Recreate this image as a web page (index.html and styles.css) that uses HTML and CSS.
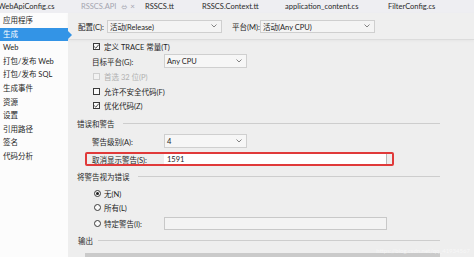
FILE: index.html
```html
<!DOCTYPE html>
<html>
<head>
<meta charset="utf-8">
<link rel="stylesheet" href="styles.css">
</head>
<body>
<div class="app">
  <div class="tabs">
    <span class="tab w84 first">WebApiConfig.cs</span>
    <span class="tab w64 dim">RSSCS.API <span class="pin">⇔</span> <span class="close">×</span></span>
    <span class="tab w57">RSSCS.tt</span>
    <span class="tab w84">RSSCS.Context.tt</span>
    <span class="tab w103">application_content.cs</span>
    <span class="tab">FilterConfig.cs</span>
  </div>
  <div class="body">
    <nav class="side">
      <div class="item">应用程序</div>
      <div class="item selected">生成</div>
      <div class="item">Web</div>
      <div class="item">打包/发布 Web</div>
      <div class="item">打包/发布 SQL</div>
      <div class="item">生成事件</div>
      <div class="item">资源</div>
      <div class="item">设置</div>
      <div class="item">引用路径</div>
      <div class="item">签名</div>
      <div class="item">代码分析</div>
    </nav>
    <main class="main">
      <div class="config">
        <span class="cfg-label">配置(C):</span>
        <div class="select cfg-select"><span>活动(Release)</span><svg class="chev" viewBox="0 0 6 4" width="6" height="4"><polyline points="0.5,0.5 3,3 5.5,0.5" fill="none" stroke="#666" stroke-width="0.8"/></svg></div>
        <span class="cfg-label plat">平台(M):</span>
        <div class="select cfg-select"><span>活动(Any CPU)</span><svg class="chev" viewBox="0 0 6 4" width="6" height="4"><polyline points="0.5,0.5 3,3 5.5,0.5" fill="none" stroke="#666" stroke-width="0.8"/></svg></div>
      </div>
      <div class="content">
        <div class="row r-trace">
          <span class="cb checked"><svg viewBox="0 0 7 7" width="7" height="7"><polyline points="1.2,3.6 2.8,5.2 5.8,1.6" fill="none" stroke="#333" stroke-width="0.9"/></svg></span>
          <span>定义 TRACE 常量(T)</span>
        </div>
        <div class="row r-target">
          <span class="label">目标平台(G):</span>
          <div class="select small"><span>Any CPU</span><svg class="chev" viewBox="0 0 6 4" width="6" height="4"><polyline points="0.5,0.5 3,3 5.5,0.5" fill="none" stroke="#666" stroke-width="0.8"/></svg></div>
        </div>
        <div class="row r-pref disabled">
          <span class="cb dis"></span>
          <span>首选 32 位(P)</span>
        </div>
        <div class="row r-unsafe">
          <span class="cb"></span>
          <span>允许不安全代码(F)</span>
        </div>
        <div class="row r-opt">
          <span class="cb checked"><svg viewBox="0 0 7 7" width="7" height="7"><polyline points="1.2,3.6 2.8,5.2 5.8,1.6" fill="none" stroke="#333" stroke-width="0.9"/></svg></span>
          <span>优化代码(Z)</span>
        </div>
        <div class="section s-errors"><span>错误和警告</span><i class="line"></i></div>
        <div class="row r-level">
          <span class="label">警告级别(A):</span>
          <div class="select small"><span>4</span><svg class="chev" viewBox="0 0 6 4" width="6" height="4"><polyline points="0.5,0.5 3,3 5.5,0.5" fill="none" stroke="#666" stroke-width="0.8"/></svg></div>
        </div>
        <div class="row r-suppress">
          <span class="label">取消显示警告(S):</span>
          <div class="input white">1591</div>
          <div class="highlight"></div>
        </div>
        <div class="section s-treat"><span>将警告视为错误</span><i class="line"></i></div>
        <div class="row r-none">
          <span class="radio on"></span>
          <span>无(N)</span>
        </div>
        <div class="row r-all">
          <span class="radio"></span>
          <span>所有(L)</span>
        </div>
        <div class="row r-spec">
          <span class="radio"></span>
          <span class="spec-label">特定警告(I):</span>
          <div class="input"></div>
        </div>
        <div class="section s-output"><span>输出</span><i class="line"></i></div>
        <div class="strip"><span class="wm">https://blog.csdn.net/qq_41934567</span></div>
      </div>
    </main>
  </div>
</div>
</body>
</html>
```

FILE: styles.css
```css
* { box-sizing: border-box; }
html, body {
  margin: 0;
  padding: 0;
  width: 474px;
  height: 257px;
  overflow: hidden;
  background: #eeeeee;
  font-family: Lato, "Noto Sans CJK SC", sans-serif;
  font-size: 7.5px;
  color: #1e1e1e;
}
.app {
  width: 474px;
  height: 257px;
  display: flex;
  flex-direction: column;
}
.tabs {
  height: 13px;
  flex: none;
  display: flex;
  align-items: center;
  background: #eeeef2;
  white-space: nowrap;
  overflow: hidden;
  color: #2a2a2a;
}
.tab { flex: none; line-height: 12px; }
.tab.first { margin-left: -2px; }
.w84 { width: 83px; }
.w64 { width: 64px; }
.w57 { width: 57px; }
.w103 { width: 103px; }
.tab.dim { color: #a4a4b0; }
.pin { margin-left: 3px; font-size: 6px; }
.close { margin-left: 1px; font-size: 8px; }

.body {
  flex: 1;
  display: flex;
  min-height: 0;
}
.side {
  width: 68px;
  flex: none;
  background: #fcfcfc;
  padding-top: 1px;
}
.item {
  height: 13.6px;
  line-height: 13.6px;
  padding-left: 3px;
  white-space: nowrap;
  position: relative;
}
.item.selected {
  background: #3394e6;
  color: #ffffff;
}
.item.selected::after {
  content: "";
  position: absolute;
  right: -4px;
  top: 3px;
  border-left: 4px solid #3394e6;
  border-top: 4px solid transparent;
  border-bottom: 4px solid transparent;
}

.main {
  flex: 1;
  display: flex;
  flex-direction: column;
  background: #eeeeee;
}
.config {
  height: 27px;
  flex: none;
  display: flex;
  align-items: center;
  padding-left: 10px;
  border-bottom: 1px solid #dcdcdc;
  box-shadow: 0 1px 3px rgba(0,0,0,0.04);
  background: #efefef;
  white-space: nowrap;
}
.cfg-label { width: 29px; flex: none; white-space: nowrap; }
.cfg-label.plat { margin-left: 10px; width: 28px; }
.select {
  display: flex;
  align-items: center;
  justify-content: space-between;
  height: 13px;
  border: 1px solid #cfcfcf;
  background: #f4f4f4;
  padding: 0 4px 0 2px;
  flex: none;
  white-space: nowrap;
}
.cfg-select { width: 115px; }
.select.small { width: 83px; height: 14px; background: #f6f6f6; }
.chev { flex: none; }

.content {
  flex: 1;
  display: flex;
  flex-direction: column;
  padding-left: 9px;
  padding-right: 34px;
}
.row {
  display: flex;
  align-items: center;
  flex: none;
  position: relative;
  padding-left: 15px;
  white-space: nowrap;
}
.r-trace { height: 13px; }
.r-target { height: 16px; }
.r-pref { height: 15px; }
.r-unsafe { height: 15px; }
.r-opt { height: 13px; }
.r-level { height: 14px; }
.r-suppress { height: 14px; margin-top: 4px; }
.r-none { height: 14px; }
.r-all { height: 15px; }
.r-spec { height: 16px; }

.label { width: 72px; flex: none; }
.cb {
  width: 7px;
  height: 7px;
  border: 0.8px solid #3a3a3a;
  background: #fafafa;
  margin-left: 1px;
  margin-right: 4px;
  flex: none;
  display: flex;
}
.cb svg { margin: -1px; }
.cb.dis { border-color: #cfcfcf; background: #f2f2f2; }
.disabled { color: #b0b0b0; }

.radio {
  width: 7px;
  height: 7px;
  border: 0.8px solid #3a3a3a;
  border-radius: 50%;
  background: #fafafa;
  margin-left: 2px;
  margin-right: 3px;
  flex: none;
  position: relative;
}
.radio.on::after {
  content: "";
  position: absolute;
  left: 1.2px;
  top: 1.2px;
  width: 3px;
  height: 3px;
  border-radius: 50%;
  background: #1e1e1e;
}
.spec-label { width: 60px; flex: none; }

.input {
  width: 223px;
  height: 13px;
  border: 1px solid #c8c8c8;
  background: #f3f3f3;
  padding-left: 2px;
  line-height: 11px;
  flex: none;
}
.input.white { background: #ffffff; height: 12px; border-color: #b8b8b8; border-left-color: #ffffff; border-top-color: #ffffff; border-bottom-color: #ffffff; }
.highlight {
  position: absolute;
  left: 8px;
  top: 0;
  width: 309px;
  height: 14px;
  border: 2px solid #e03a3a;
  border-radius: 2px;
  pointer-events: none;
}

.section {
  display: flex;
  align-items: center;
  flex: none;
  color: #2a2a2a;
}
.section .line {
  flex: 1;
  height: 1px;
  background: #cdcdcd;
  margin-left: 8px;
}
.s-errors { height: 22px; }
.s-treat { height: 20px; }
.s-output { height: 18px; padding-left: 1px; }
.s-output .line { margin-left: 5px; }

.strip {
  margin-top: 4px;
  margin-left: 8px;
  height: 8px;
  background: #cacaca;
  flex: none;
  position: relative;
}
.wm {
  position: absolute;
  right: -30px;
  top: -6px;
  font-size: 6px;
  color: rgba(255,255,255,0.55);
  white-space: nowrap;
}
```
